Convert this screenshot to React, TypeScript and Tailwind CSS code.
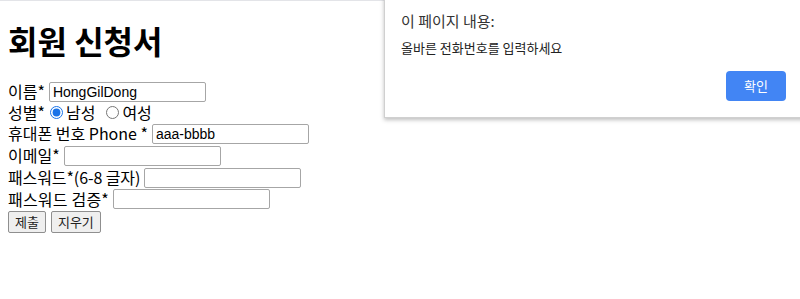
import { useState } from 'react';

const kr = 'font-["Malgun_Gothic","Noto_Sans_CJK_KR",sans-serif]';

function TextBox({ width, value = '' }: { width: string; value?: string }) {
  return (
    <input
      type="text"
      defaultValue={value}
      className={`${width} h-[20px] border border-[#a6a6a6] rounded-[2px] bg-white px-[3px] text-[14px] leading-none text-black font-["Liberation_Sans",Arial,sans-serif] outline-none`}
    />
  );
}

export default function App() {
  const [gender, setGender] = useState('m');

  return (
    <div className={`relative w-[800px] h-[299px] overflow-hidden bg-white text-black ${kr}`}>
      <div className="h-px bg-[#e3e4e8]" />

      <div className="px-2">
        <h1 className="text-[32px] font-bold leading-[38px] pt-[20px] pb-[22px]">회원 신청서</h1>

        <div className="flex flex-col text-[16px] leading-[19px]">
          <div className="flex items-center h-[21px] gap-[4px]">
            <span>이름*</span>
            <TextBox width="w-[157px]" value="HongGilDong" />
          </div>

          <div className="flex items-center h-[20px]">
            <span>성별*</span>
            <label className="flex items-center ml-[5px]">
              <input
                type="radio"
                checked={gender === 'm'}
                onChange={() => setGender('m')}
                className="w-[13px] h-[13px] m-0 mr-[3px] accent-[#1a73e8]"
              />
              <span>남성</span>
            </label>
            <label className="flex items-center ml-[11px]">
              <input
                type="radio"
                checked={gender === 'f'}
                onChange={() => setGender('f')}
                className="w-[13px] h-[13px] m-0 mr-[3px] accent-[#1a73e8]"
              />
              <span>여성</span>
            </label>
          </div>

          <div className="flex items-center h-[23px] gap-[4px]">
            <span>휴대폰 번호 Phone *</span>
            <TextBox width="w-[157px]" value="aaa-bbbb" />
          </div>

          <div className="flex items-center h-[21px] gap-[4px]">
            <span>이메일*</span>
            <TextBox width="w-[157px]" />
          </div>

          <div className="flex items-center h-[23px] gap-[4px]">
            <span className="tracking-[-0.1px]">패스워드*(6-8 글자)</span>
            <TextBox width="w-[157px]" />
          </div>

          <div className="flex items-center h-[20px] gap-[4px]">
            <span className="tracking-[0.2px]">패스워드 검증*</span>
            <TextBox width="w-[157px]" />
          </div>

          <div className="flex items-center h-[25px] gap-[5px]">
            <button className="h-[22px] px-[6px] text-[13px] leading-[18px] border border-[#8f8f8f] rounded-[2px] bg-[#efefef] text-[#222]">
              제출
            </button>
            <button className="h-[22px] px-[6px] text-[13px] leading-[18px] border border-[#8f8f8f] rounded-[2px] bg-[#efefef] text-[#222]">
              지우기
            </button>
          </div>
        </div>
      </div>

      <div className="absolute left-[384px] top-[-4px] w-[430px] h-[122px] bg-white border border-[#d0d0d0] shadow-[0_2px_4px_rgba(0,0,0,0.25)]">
        <div className="pt-[14px] pl-[16px] pr-[27px]">
          <p className="text-[15px] leading-[20px] text-[#333]">이 페이지 내용:</p>
          <p className="mt-[8px] text-[13px] leading-[18px] text-[#222]">올바른 전화번호를 입력하세요</p>
          <div className="flex justify-end mt-[14px]">
            <button className="w-[60px] h-[30px] rounded-[4px] bg-[#4285f4] text-white text-[13px]">
              확인
            </button>
          </div>
        </div>
      </div>
    </div>
  );
}
